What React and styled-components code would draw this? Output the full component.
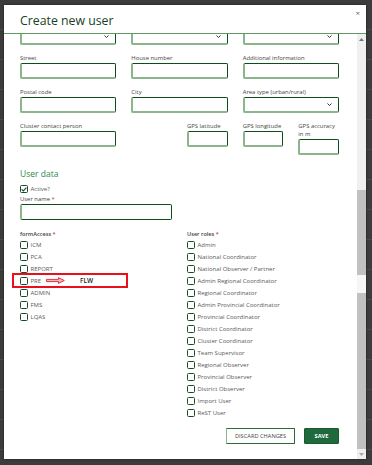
import React from 'react';
import styled, { createGlobalStyle } from 'styled-components';

const Global = createGlobalStyle`
  html, body { margin: 0; padding: 0; }
  body {
    background: #3c3c3c;
    font-family: "Open Sans", "Liberation Sans", sans-serif;
  }
  * { box-sizing: border-box; }
`;

const Backdrop = styled.div`
  width: 372px;
  height: 465px;
  padding: 5px 6px 6px 4px;
  background-color: #3c3c3c;
  background-image: repeating-linear-gradient(
    to bottom,
    transparent 0px,
    transparent 29px,
    #4a4a4a 29px,
    #4a4a4a 30px
  );
  overflow: hidden;
`;

const Modal = styled.div`
  width: 362px;
  height: 454px;
  background: #fff;
  display: flex;
  flex-direction: column;
  box-shadow: 0 0 2px rgba(0, 0, 0, 0.6);
`;

const Header = styled.div`
  height: 29px;
  flex: none;
  display: flex;
  align-items: center;
  justify-content: space-between;
  padding: 0 6px 0 16px;
  border-bottom: 1.5px solid #5d9a65;
`;

const Title = styled.h1`
  margin: 2px 0 0;
  font-size: 12.3px;
  font-weight: 400;
  color: #173f25;
`;

const Close = styled.span`
  align-self: flex-start;
  margin-top: 4px;
  font-size: 8px;
  line-height: 8px;
  color: #666;
`;

const Body = styled.div`
  flex: 1;
  min-height: 0;
  display: flex;
`;

const Scroller = styled.div`
  flex: 1;
  overflow: hidden;
  padding: 0 18px 0 16px;
`;

const Content = styled.div`
  margin-top: -5px;
  width: 319px;
`;

const Grid = styled.div`
  display: grid;
  grid-template-columns: repeat(6, 1fr);
  column-gap: 15px;
  row-gap: 9px;
  align-items: start;
`;

const Field = styled.div`
  display: flex;
  flex-direction: column;
  gap: 1px;
  grid-column: ${(p) => p.$col || 'span 2'};
`;

const Label = styled.label`
  font-size: 5.9px;
  line-height: 8px;
  color: #444;
`;

const Req = styled.span`
  color: #d0303a;
`;

const Input = styled.div`
  height: 16px;
  width: ${(p) => p.$width || '100%'};
  border: 1px solid #0d4d18;
  border-left: 2px solid #8db58d;
  border-bottom: ${(p) => (p.$flat ? '1px solid #0d4d18' : '2px solid #8db58d')};
  border-radius: 2px;
  background: #fff;
  display: flex;
  align-items: center;
  justify-content: flex-end;
  padding-right: 6px;
`;

const Section = styled.h2`
  margin: 13px 0 0;
  font-size: 8.5px;
  line-height: 12px;
  font-weight: 400;
  color: #2a8a4b;
`;

const CheckRow = styled.div`
  position: relative;
  display: flex;
  align-items: center;
  gap: 2.5px;
  height: ${(p) => p.$h || '12px'};
  font-size: 6px;
  color: #5a5a5a;
  margin-top: ${(p) => p.$mt || '0'};
`;

const Box = styled.span`
  width: 8px;
  height: 8px;
  flex: none;
  border: 1.3px solid #1a4a2a;
  border-radius: 1.5px;
  display: flex;
  align-items: center;
  justify-content: center;
`;

const NameBlock = styled.div`
  display: flex;
  flex-direction: column;
  gap: 1px;
  margin-top: 2px;
`;

const Columns = styled.div`
  display: grid;
  grid-template-columns: 152px 152px;
  column-gap: 15px;
  margin-top: 10px;
`;

const ListHead = styled.div`
  font-size: 5.6px;
  line-height: 8px;
  font-weight: 600;
  color: #444;
  margin-bottom: 1px;
`;

const Actions = styled.div`
  display: flex;
  justify-content: flex-end;
  gap: 9px;
  margin-top: 9px;
  padding-bottom: 16px;
`;

const Button = styled.button`
  height: 16px;
  padding: 0;
  width: ${(p) => (p.$primary ? '35px' : '69px')};
  font-family: inherit;
  font-size: 5.7px;
  font-weight: ${(p) => (p.$primary ? 700 : 400)};
  color: ${(p) => (p.$primary ? '#fff' : '#444')};
  background: ${(p) => (p.$primary ? '#1f6a3d' : '#fff')};
  border: 1px solid ${(p) => (p.$primary ? '#1a5a32' : '#2a6a3a')};
  border-left: ${(p) => (p.$primary ? '1px solid #1a5a32' : '1.5px solid #8db58d')};
  border-radius: 1px;
`;

const Note = styled.div`
  position: absolute;
  left: -8px;
  top: -2px;
  width: 116px;
  height: 15px;
  border: 2px solid #e8101c;
  pointer-events: none;
`;

const NoteArrow = styled.svg`
  position: absolute;
  left: 32px;
  top: 2px;
`;

const NoteText = styled.span`
  position: absolute;
  left: 66px;
  top: 0.5px;
  font-size: 6.5px;
  line-height: 10px;
  font-weight: 600;
  color: #222;
`;

const ScrollBar = styled.div`
  width: 9px;
  flex: none;
  background: #f0f0f0;
  display: flex;
  flex-direction: column;
  align-items: center;
`;

const ArrowCell = styled.div`
  height: 10px;
  flex: none;
  display: flex;
  align-items: center;
  justify-content: center;
`;

const Track = styled.div`
  flex: 1;
  width: 100%;
  padding-top: 146px;
  display: flex;
`;

const Thumb = styled.div`
  flex: 1;
  background: linear-gradient(
    to bottom,
    #c1c1c1 0px,
    #c1c1c1 85px,
    #f6f6f6 85px,
    #f6f6f6 103px,
    #c1c1c1 103px
  );
`;

const Chevron = () => (
  <svg width="5" height="3" viewBox="0 0 5 3">
    <path d="M0.5 0.5 L2.5 2.5 L4.5 0.5" fill="none" stroke="#333" strokeWidth="1" />
  </svg>
);

const Tick = () => (
  <svg width="6" height="5" viewBox="0 0 6 5">
    <path d="M0.6 2.4 L2.3 4 L5.4 0.7" fill="none" stroke="#1a4a2a" strokeWidth="1.1" />
  </svg>
);

const Check = ({ label, checked, children, ...rest }) => (
  <CheckRow {...rest}>
    <Box>{checked && <Tick />}</Box>
    {label}
    {children}
  </CheckRow>
);

const access = ['ICM', 'PCA', 'REPORT', 'PRE', 'ADMIN', 'FMS', 'LQAS'];

const roles = [
  'Admin',
  'National Coordinator',
  'National Observer / Partner',
  'Admin Regional Coordinator',
  'Regional Coordinator',
  'Admin Provincial Coordinator',
  'Provincial Coordinator',
  'District Coordinator',
  'Cluster Coordinator',
  'Team Supervisor',
  'Regional Observer',
  'Provincial Observer',
  'District Observer',
  'Import User',
  'ReST User',
];

export default function App() {
  return (
    <>
      <Global />
      <Backdrop>
        <Modal>
          <Header>
            <Title>Create new user</Title>
            <Close>×</Close>
          </Header>
          <Body>
            <Scroller>
              <Content>
                <Grid>
                  {[1, 2, 3].map((n) => (
                    <Field key={n}>
                      <Input><Chevron /></Input>
                    </Field>
                  ))}
                  <Field>
                    <Label>Street</Label>
                    <Input />
                  </Field>
                  <Field>
                    <Label>House number</Label>
                    <Input />
                  </Field>
                  <Field>
                    <Label>Additional information</Label>
                    <Input />
                  </Field>
                  <Field>
                    <Label>Postal code</Label>
                    <Input />
                  </Field>
                  <Field>
                    <Label>City</Label>
                    <Input />
                  </Field>
                  <Field>
                    <Label>Area type (urban/rural)</Label>
                    <Input><Chevron /></Input>
                  </Field>
                  <Field>
                    <Label>Cluster contact person</Label>
                    <Input />
                  </Field>
                  <Field $col="4 / 5">
                    <Label>GPS latitude</Label>
                    <Input />
                  </Field>
                  <Field $col="5 / 6">
                    <Label>GPS longitude</Label>
                    <Input />
                  </Field>
                  <Field $col="6 / 7">
                    <Label>GPS accuracy in m</Label>
                    <Input />
                  </Field>
                </Grid>

                <Section>User data</Section>
                <Check label="Active?" checked $h="8px" $mt="5px" />
                <NameBlock>
                  <Label>User name <Req>*</Req></Label>
                  <Input $width="152px" $flat />
                </NameBlock>

                <Columns>
                  <div>
                    <ListHead>formAccess <Req>*</Req></ListHead>
                    {access.map((a) => (
                      <Check key={a} label={a}>
                        {a === 'PRE' && (
                          <Note>
                            <NoteArrow width="19" height="7" viewBox="0 0 19 7">
                              <path
                                d="M0.5 2.4 H12.5 V0.6 L18.3 3.5 L12.5 6.4 V4.6 H0.5 Z"
                                fill="#f3b9b9"
                                stroke="#e0202a"
                                strokeWidth="0.9"
                              />
                            </NoteArrow>
                            <NoteText>FLW</NoteText>
                          </Note>
                        )}
                      </Check>
                    ))}
                  </div>
                  <div>
                    <ListHead>User roles <Req>*</Req></ListHead>
                    {roles.map((r) => (
                      <Check key={r} label={r} />
                    ))}
                  </div>
                </Columns>

                <Actions>
                  <Button>DISCARD CHANGES</Button>
                  <Button $primary>SAVE</Button>
                </Actions>
              </Content>
            </Scroller>
            <ScrollBar>
              <ArrowCell>
                <svg width="5" height="3" viewBox="0 0 5 3">
                  <path d="M0 3 L2.5 0 L5 3 Z" fill="#777" />
                </svg>
              </ArrowCell>
              <Track>
                <Thumb />
              </Track>
              <ArrowCell>
                <svg width="5" height="3" viewBox="0 0 5 3">
                  <path d="M0 0 L2.5 3 L5 0 Z" fill="#aaa" />
                </svg>
              </ArrowCell>
            </ScrollBar>
          </Body>
        </Modal>
      </Backdrop>
    </>
  );
}
